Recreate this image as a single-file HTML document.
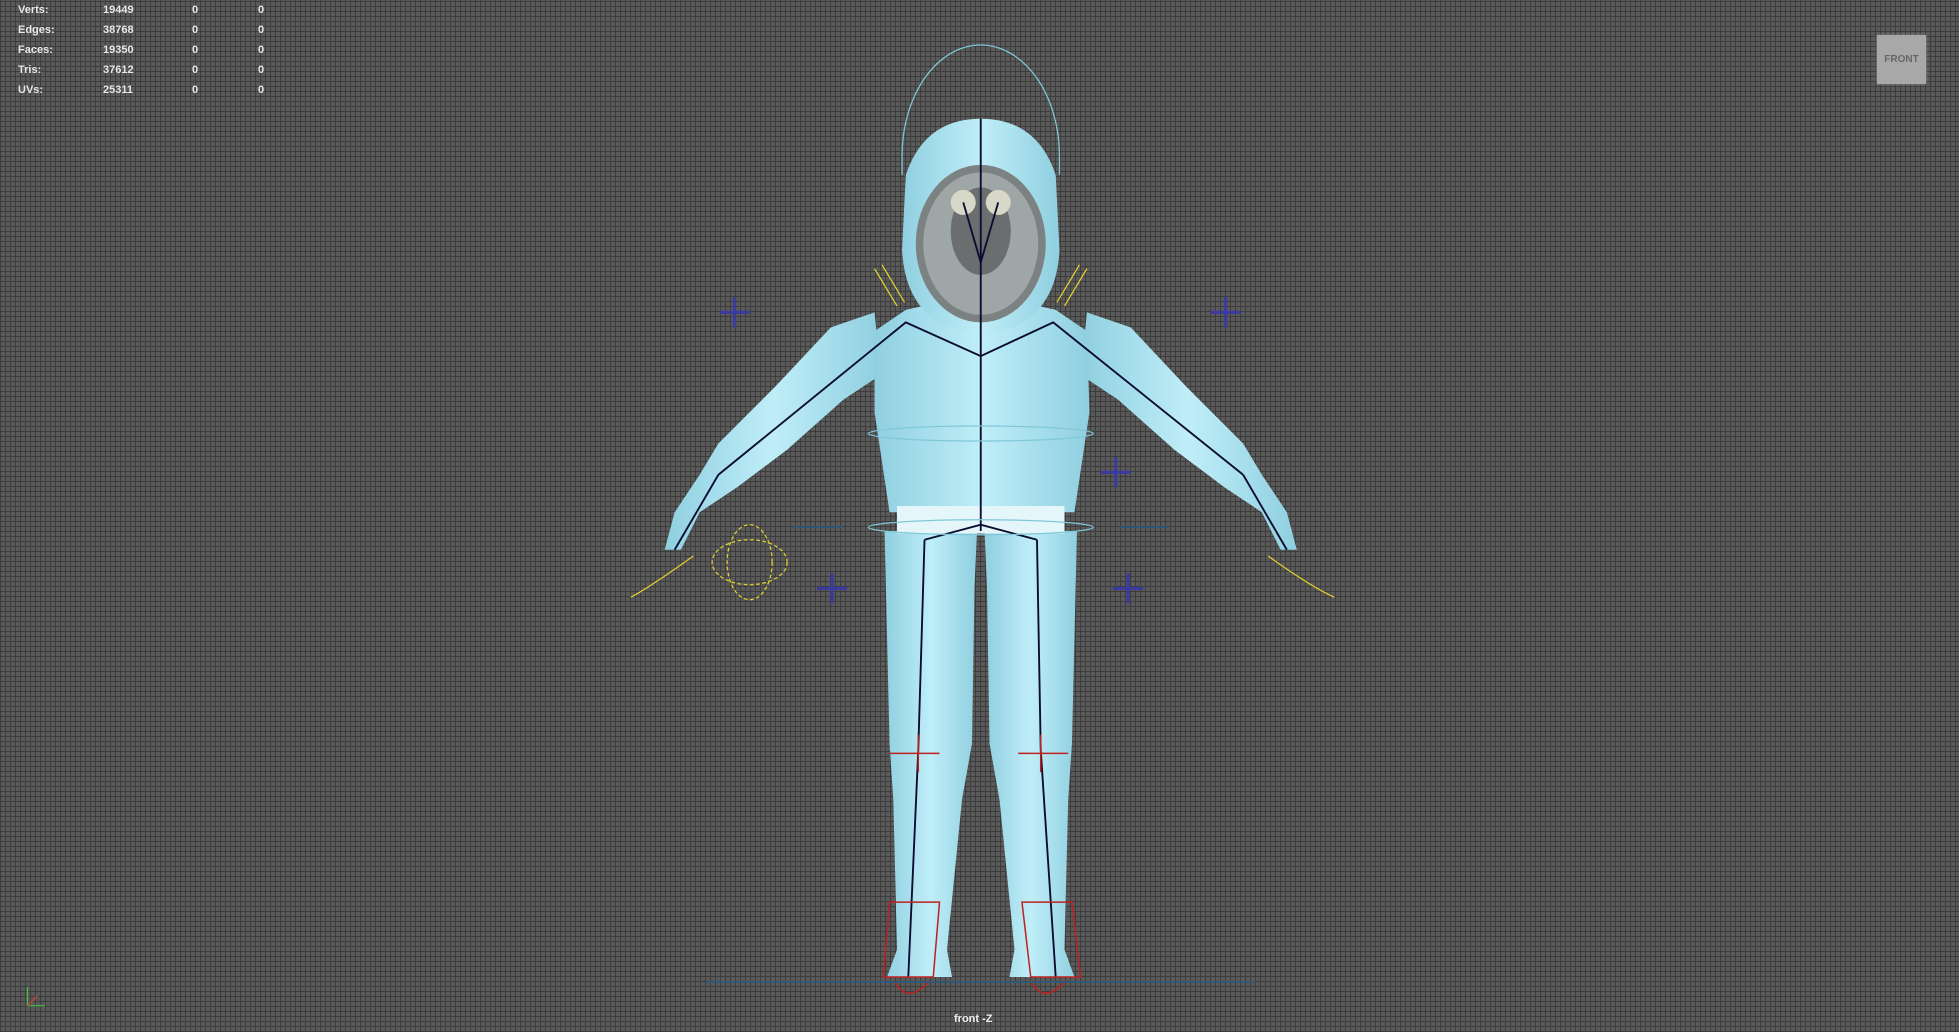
<!DOCTYPE html>
<html><head><meta charset="utf-8"><style>
html,body{margin:0;padding:0;width:1959px;height:1032px;overflow:hidden}
body{background-color:#5a5a5a;
background-image:repeating-linear-gradient(90deg,#3c3c3c 0 1px,transparent 1px 5px),repeating-linear-gradient(0deg,#3c3c3c 0 1px,transparent 1px 5px);
font-family:"Liberation Sans",sans-serif;position:relative}
.st{position:absolute;color:#e8e8e8;font-size:11px;font-weight:bold}
svg{position:absolute;left:0;top:0}
.cube{position:absolute;left:1877px;top:35px;width:49px;height:49px;background:#a8a8a8;color:#666;font-size:10px;font-weight:bold;text-align:center;line-height:49px;box-shadow:0 0 3px #888}
.lbl{position:absolute;left:954px;top:1013px;color:#f0f0f0;font-size:11px;font-weight:bold}
</style></head><body>
<div class="st" style="left:18px;top:4px">Verts:</div><div class="st" style="left:103px;top:4px">19449</div><div class="st" style="left:192px;top:4px">0</div><div class="st" style="left:258px;top:4px">0</div>
<div class="st" style="left:18px;top:24px">Edges:</div><div class="st" style="left:103px;top:24px">38768</div><div class="st" style="left:192px;top:24px">0</div><div class="st" style="left:258px;top:24px">0</div>
<div class="st" style="left:18px;top:44px">Faces:</div><div class="st" style="left:103px;top:44px">19350</div><div class="st" style="left:192px;top:44px">0</div><div class="st" style="left:258px;top:44px">0</div>
<div class="st" style="left:18px;top:64px">Tris:</div><div class="st" style="left:103px;top:64px">37612</div><div class="st" style="left:192px;top:64px">0</div><div class="st" style="left:258px;top:64px">0</div>
<div class="st" style="left:18px;top:84px">UVs:</div><div class="st" style="left:103px;top:84px">25311</div><div class="st" style="left:192px;top:84px">0</div><div class="st" style="left:258px;top:84px">0</div>
<div class="cube">FRONT</div>
<svg width="1959" height="1032" viewBox="0 0 1568 826" preserveAspectRatio="none">
<defs><linearGradient id="b" x1="0" x2="1"><stop offset="0" stop-color="#8fcfe0"/><stop offset=".5" stop-color="#bfeef8"/><stop offset="1" stop-color="#8fcfe0"/></linearGradient></defs>
<path d="M722,140 L722,125 A63,89 0 1 1 848,125 L848,140" fill="none" stroke="#7fc8d8" stroke-width="1"/>
<g fill="url(#b)">
<path d="M700,250 L665,262 L620,310 L575,355 L560,380 L540,410 L532,440 L545,440 L560,410 L590,390 L630,360 L675,320 L705,300Z"/>
<path d="M870,250 L905,262 L950,310 L995,355 L1010,380 L1030,410 L1038,440 L1025,440 L1010,410 L980,390 L940,360 L895,320 L865,300Z"/>
<path d="M700,265 L725,248 L760,240 L810,240 L845,248 L870,265 L872,330 L860,410 L712,410 L700,330Z"/>
<path d="M725,140 Q740,95 785,95 Q830,95 845,140 L848,200 Q845,262 785,268 Q725,262 722,200Z"/>
<path d="M708,425 L782,425 L780,470 L778,595 L770,640 L758,760 L762,782 L710,782 L718,760 L715,640 L712,595Z"/>
<path d="M862,425 L788,425 L790,470 L792,595 L800,640 L812,760 L808,782 L860,782 L852,760 L855,640 L858,595Z"/>
</g>
<ellipse cx="785" cy="195" rx="52" ry="63" fill="#7c8282"/>
<ellipse cx="785" cy="195" rx="46" ry="57" fill="#9ea6a6"/>
<ellipse cx="785" cy="185" rx="24" ry="35" fill="#6a6e6e"/>
<circle cx="771" cy="162" r="10" fill="#d8d8c8"/><circle cx="799" cy="162" r="10" fill="#d8d8c8"/>
<rect x="718" y="405" width="134" height="22" fill="#e4f6fa"/>
<g stroke="#0c0c30" stroke-width="1.5" fill="none">
<path d="M785,95 V425"/>
<path d="M575,380 L725,258 L785,285 L843,258 L995,380"/>
<path d="M575,380 L540,440 M995,380 L1030,440"/>
<path d="M740,432 L785,420 L830,432 M740,432 L735,600 L727,782 M830,432 L833,600 L845,782"/>
<path d="M771,162 L785,210 L799,162"/>
</g>
<g stroke="#3a3aa0" stroke-width="2.5" fill="none">
<path d="M576,250h24M588,238v24M969,250h24M981,238v24M881,378h24M893,366v24M654,471h24M666,459v24M891,471h24M903,459v24"/>
</g>
<g stroke="#e0d030" stroke-width="1" fill="none">
<path d="M505,478 Q520,470 555,445M1015,445 Q1050,470 1068,478"/>
<ellipse cx="600" cy="450" rx="30" ry="18" stroke-dasharray="3 2"/><ellipse cx="600" cy="450" rx="18" ry="30" stroke-dasharray="3 2"/>
<path d="M700,215 L718,245 M706,212 L724,242 M870,215 L852,245 M864,212 L846,242"/>
</g>
<g stroke="#c02020" stroke-width="1.2" fill="none">
<path d="M712,603h40M735,588v30M815,603h40M833,588v30"/>
<path d="M712,722h40l-5,60h-40zM818,722h40l7,60h-40z"/>
<path d="M716,785q10,20 28,0M825,785q10,20 28,0"/>
</g>
<g stroke="#80c8d8" stroke-width="1" fill="none">
<ellipse cx="785" cy="347" rx="90" ry="6"/><ellipse cx="785" cy="422" rx="90" ry="6"/>
</g>
<path d="M565,786 H1005" stroke="#305878" stroke-width="1.5"/>
<path d="M635,422h40M895,422h40" stroke="#305878" stroke-width="1.5"/>
<path d="M22,805 V790 M22,805 H36" stroke="#40c040" stroke-width="1"/>
<path d="M22,805 L30,797" stroke="#d04040" stroke-width="1"/>
</svg>
<div class="lbl">front -Z</div>
</body></html>
